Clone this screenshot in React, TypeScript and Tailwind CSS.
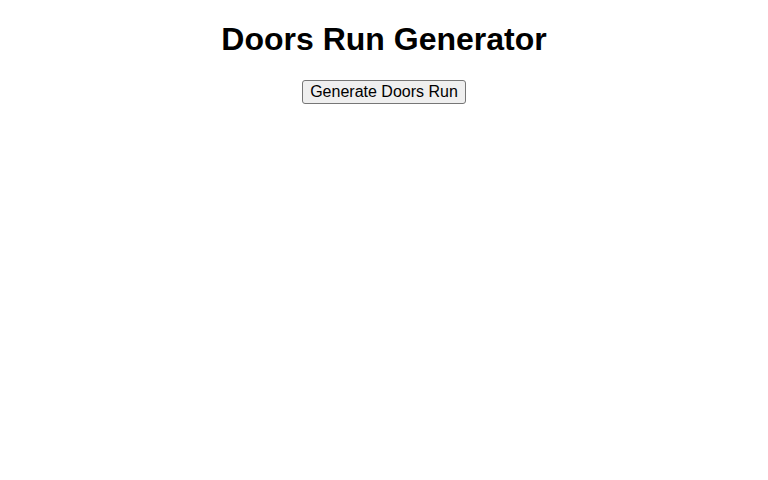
import React, { useState } from 'react';

const rooms = ['Seek chase', 'Rush', 'Ambush', 'Figure library', 'Halt', 'Eyes', 'Screech', 'Dupe'];

export default function App() {
  const [run, setRun] = useState<string[]>([]);

  const generate = () => {
    const out: string[] = [];
    for (let i = 0; i < 5; i++) out.push(rooms[Math.floor(Math.random() * rooms.length)]);
    setRun(out);
  };

  return (
    <div className="min-h-[480px] bg-white text-center text-black font-['Liberation_Sans',Arial,sans-serif]">
      <h1 className="pt-[21px] pb-[22px] text-[32px] leading-[37px] font-bold">Doors Run Generator</h1>
      <button
        onClick={generate}
        className="text-[16px] leading-[18px] px-[7px] py-[2px] bg-[#efefef] border border-[#767676] rounded-[3px] text-black"
      >
        Generate Doors Run
      </button>
      {run.length > 0 && (
        <ul className="mt-4 text-[16px]">
          {run.map((r, i) => (
            <li key={i}>{r}</li>
          ))}
        </ul>
      )}
    </div>
  );
}
